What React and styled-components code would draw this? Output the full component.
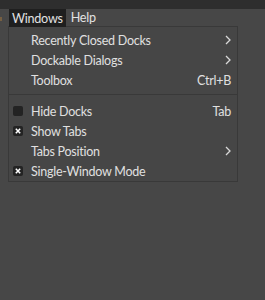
import React from "react";
import styled, { createGlobalStyle } from "styled-components";

const Global = createGlobalStyle`
  html, body { margin: 0; padding: 0; background: #474747; }
  body { font-family: Lato, "Noto Sans", sans-serif; }
`;

const Page = styled.div`
  width: 265px;
  height: 300px;
  background: #474747;
  overflow: hidden;
`;

const TopStrip = styled.div`
  height: 9px;
  background: #2e2e2e;
`;

const MenuBar = styled.div`
  height: 17px;
  display: flex;
  align-items: stretch;
`;

const Remnant = styled.span`
  width: 2px;
  height: 4px;
  margin-top: 8px;
  margin-right: 7px;
  background: #8a6a40;
  opacity: 0.7;
`;

const BarItem = styled.div`
  display: flex;
  align-items: center;
  padding: ${(p) => (p.$active ? "0 3px 0 3px" : "0 0 0 5px")};
  font-size: 12.6px;
  letter-spacing: -0.25px;
  color: #e2e2e2;
  background: ${(p) => (p.$active ? "#1f1f1f" : "transparent")};
  height: ${(p) => (p.$active ? "18px" : "17px")};
  box-sizing: border-box;
`;

const Popup = styled.div`
  margin-left: 8px;
  width: 230px;
  box-sizing: border-box;
  border: 1px solid #393939;
  background: #464646;
  padding: 3px 0 0 0;
`;

const Row = styled.div`
  height: 20px;
  display: grid;
  grid-template-columns: 22px 1fr auto;
  align-items: center;
  padding-right: 6px;
  font-size: 12.5px;
  letter-spacing: -0.25px;
  color: #e0e0e0;
`;

const IconCell = styled.div`
  display: flex;
  align-items: center;
  padding-left: 4px;
`;

const Label = styled.span`
  white-space: nowrap;
`;

const Accel = styled.span`
  color: #e0e0e0;
`;

const Separator = styled.div`
  height: 1px;
  background: #393939;
  margin: 4px 0 6px;
`;

const Check = styled.span`
  width: 10px;
  height: 10px;
  border-radius: 2px;
  background: #232323;
  display: flex;
  align-items: center;
  justify-content: center;
`;

const Chevron = () => (
  <svg width="6" height="10" viewBox="0 0 6 10">
    <path d="M1 1 L5 5 L1 9" fill="none" stroke="#d8d8d8" strokeWidth="1.3" />
  </svg>
);

const XMark = () => (
  <svg width="6" height="6" viewBox="0 0 6 6">
    <path d="M0.8 0.8 L5.2 5.2 M5.2 0.8 L0.8 5.2" stroke="#ffffff" strokeWidth="1.5" />
  </svg>
);

const Item = ({ check, label, accel, sub }) => (
  <Row>
    <IconCell>
      {check !== undefined && <Check>{check && <XMark />}</Check>}
    </IconCell>
    <Label>{label}</Label>
    {sub ? <Chevron /> : <Accel>{accel}</Accel>}
  </Row>
);

export default function App() {
  return (
    <Page>
      <Global />
      <TopStrip />
      <MenuBar>
        <Remnant />
        <BarItem $active>Windows</BarItem>
        <BarItem>Help</BarItem>
      </MenuBar>
      <Popup>
        <Item label="Recently Closed Docks" sub />
        <Item label="Dockable Dialogs" sub />
        <Item label="Toolbox" accel="Ctrl+B" />
        <Separator />
        <Item check={false} label="Hide Docks" accel="Tab" />
        <Item check={true} label="Show Tabs" />
        <Item label="Tabs Position" sub />
        <Item check={true} label="Single-Window Mode" />
      </Popup>
    </Page>
  );
}
